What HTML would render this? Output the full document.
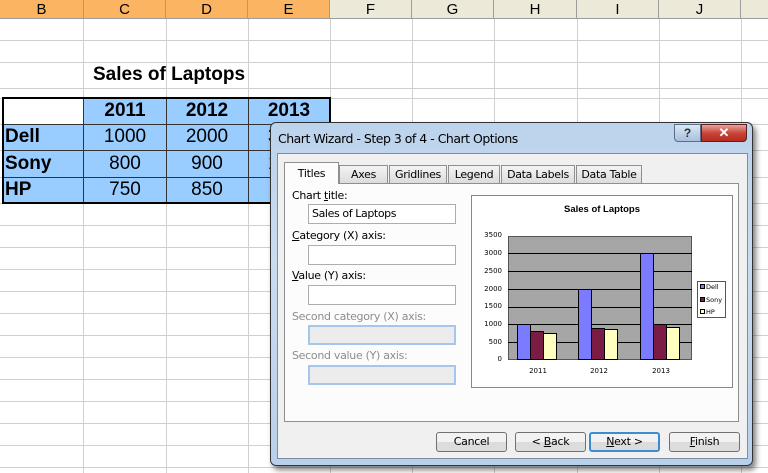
<!DOCTYPE html>
<html><head><meta charset="utf-8"><style>
*{margin:0;padding:0;box-sizing:border-box}
body{width:768px;height:473px;overflow:hidden;background:#fff;position:relative;font-family:"Liberation Sans",sans-serif}
.a{position:absolute}
.hd{position:absolute;top:0;height:19px;border-right:1px solid #9c9c9c;border-bottom:1px solid #9c9c9c;text-align:center;font-size:15px;line-height:19px;color:#000}
.vl{position:absolute;top:19px;bottom:0;width:1px;background:#d0d0d0}
.hl{position:absolute;left:0;right:0;height:1px;background:#d0d0d0}
.c{position:absolute;font-size:19px;text-align:center;line-height:26px}
.b{font-weight:bold}
.tab{position:absolute;top:165px;height:18px;border:1px solid #8e8f8f;border-bottom:none;background:linear-gradient(#f4f4f4,#dcdcdc);font-size:11px;text-align:center;line-height:17px;font-family:"DejaVu Sans",sans-serif;letter-spacing:-0.3px}
.lbl{position:absolute;font-size:11px;font-family:"DejaVu Sans",sans-serif;letter-spacing:-0.3px;color:#000}
.inp{position:absolute;left:308px;width:148px;height:20px;border:1px solid #abadb3;background:#fff}
.btn{position:absolute;top:432px;height:20px;border:1px solid #707070;border-radius:3px;background:linear-gradient(#f2f2f2 50%,#dcdcdc 50%);font-size:11px;font-family:"DejaVu Sans",sans-serif;text-align:center;line-height:18px;letter-spacing:-0.3px}
.yt{position:absolute;left:474px;width:28px;text-align:right;font-size:7px;font-family:"DejaVu Sans",sans-serif}
.gl{position:absolute;left:508px;width:184px;height:1px;background:#000}
</style></head><body>
<!-- headers -->
<div class="hd" style="left:0;width:84px;background:#fbb461">B</div>
<div class="hd" style="left:84px;width:82px;background:#fbb461">C</div>
<div class="hd" style="left:166px;width:82px;background:#fbb461">D</div>
<div class="hd" style="left:248px;width:82px;background:#fbb461">E</div>
<div class="hd" style="left:330px;width:82px;background:#ece9d8">F</div>
<div class="hd" style="left:412px;width:82px;background:#ece9d8">G</div>
<div class="hd" style="left:494px;width:83px;background:#ece9d8">H</div>
<div class="hd" style="left:577px;width:82px;background:#ece9d8">I</div>
<div class="hd" style="left:659px;width:82px;background:#ece9d8">J</div>
<div class="hd" style="left:741px;width:30px;background:#ece9d8"></div>
<!-- grid -->
<div class="vl" style="left:83px"></div><div class="vl" style="left:166px"></div><div class="vl" style="left:248px"></div><div class="vl" style="left:330px"></div><div class="vl" style="left:412px"></div><div class="vl" style="left:494px"></div><div class="vl" style="left:577px"></div><div class="vl" style="left:659px"></div><div class="vl" style="left:741px"></div>
<div class="hl" style="top:40px"></div><div class="hl" style="top:62px"></div><div class="hl" style="top:88px"></div><div class="hl" style="top:98px"></div><div class="hl" style="top:124px"></div><div class="hl" style="top:150px"></div><div class="hl" style="top:177px"></div><div class="hl" style="top:203px"></div><div class="hl" style="top:225px"></div><div class="hl" style="top:247px"></div><div class="hl" style="top:269px"></div><div class="hl" style="top:291px"></div><div class="hl" style="top:313px"></div><div class="hl" style="top:335px"></div><div class="hl" style="top:357px"></div><div class="hl" style="top:379px"></div><div class="hl" style="top:401px"></div><div class="hl" style="top:423px"></div><div class="hl" style="top:445px"></div><div class="hl" style="top:467px"></div>
<div class="a b" style="left:93px;top:64px;font-size:19px">Sales of Laptops</div>
<!-- table -->
<div class="a" style="left:2px;top:97px;width:329px;height:107px;border:2px solid #000;background:#fff"></div>
<div class="a" style="left:84px;top:99px;width:245px;height:25px;background:#99ccff"></div>
<div class="a" style="left:4px;top:125px;width:325px;height:77px;background:#99ccff"></div>
<div class="a" style="left:83px;top:99px;width:1px;height:103px;background:#333"></div>
<div class="a" style="left:166px;top:99px;width:1px;height:103px;background:#333"></div>
<div class="a" style="left:248px;top:99px;width:1px;height:103px;background:#333"></div>
<div class="a" style="left:4px;top:124px;width:325px;height:1px;background:#333"></div>
<div class="a" style="left:4px;top:150px;width:325px;height:1px;background:#333"></div>
<div class="a" style="left:4px;top:177px;width:325px;height:1px;background:#333"></div>
<div class="c b" style="left:84px;top:98px;width:82px">2011</div>
<div class="c b" style="left:166px;top:98px;width:82px">2012</div>
<div class="c b" style="left:248px;top:98px;width:82px">2013</div>
<div class="c b" style="left:5px;top:124px;text-align:left">Dell</div>
<div class="c b" style="left:5px;top:151px;text-align:left">Sony</div>
<div class="c b" style="left:5px;top:177px;text-align:left">HP</div>
<div class="c" style="left:84px;top:124px;width:82px">1000</div><div class="c" style="left:166px;top:124px;width:82px">2000</div><div class="c" style="left:248px;top:124px;width:82px">3000</div>
<div class="c" style="left:84px;top:151px;width:82px">800</div><div class="c" style="left:166px;top:151px;width:82px">900</div><div class="c" style="left:248px;top:151px;width:82px">1000</div>
<div class="c" style="left:84px;top:177px;width:82px">750</div><div class="c" style="left:166px;top:177px;width:82px">850</div><div class="c" style="left:248px;top:177px;width:82px">900</div>
<!-- dialog -->
<div class="a" style="left:270px;top:122px;width:483px;height:344px;border:1px solid #333;border-radius:6px;background:linear-gradient(#bcd3ec,#c9dcf0 40%,#b9d0ea);box-shadow:3px 4px 6px rgba(0,0,0,.5)"></div>
<div class="a" style="left:278px;top:131px;font-size:12.5px;font-family:'DejaVu Sans',sans-serif;letter-spacing:-0.5px">Chart Wizard - Step 3 of 4 - Chart Options</div>
<div class="a" style="left:674px;top:124px;width:27px;height:18px;border:1px solid #5a6f8c;border-radius:0 0 0 4px;background:linear-gradient(#dce7f4,#a9bfdb);font-size:12px;text-align:center;line-height:16px;font-weight:bold;color:#233">?</div>
<div class="a" style="left:701px;top:124px;width:46px;height:18px;border:1px solid #5a2020;border-radius:0 0 4px 0;background:linear-gradient(#e8a49a,#c9463a 50%,#b52a1e);font-size:13px;text-align:center;line-height:16px;font-weight:bold;color:#fff">✕</div>
<div class="a" style="left:277px;top:153px;width:471px;height:306px;border:1px solid #7c8ea3;background:#f0f0f0"></div>
<!-- tabs -->
<div class="a" style="left:284px;top:183px;width:455px;height:239px;border:1px solid #8e8f8f;background:#fcfcfc"></div>
<div class="tab" style="left:339px;width:49px">Axes</div>
<div class="tab" style="left:389px;width:58px">Gridlines</div>
<div class="tab" style="left:448px;width:52px">Legend</div>
<div class="tab" style="left:501px;width:74px">Data Labels</div>
<div class="tab" style="left:576px;width:66px">Data Table</div>
<div class="tab" style="left:284px;top:162px;height:22px;width:55px;background:#fcfcfc;line-height:22px">Titles</div>
<div class="lbl" style="left:292px;top:189px">Chart <u>t</u>itle:</div>
<div class="inp" style="top:204px;padding-left:3px;font-size:11px;font-family:'DejaVu Sans',sans-serif;letter-spacing:-0.4px;line-height:18px">Sales of Laptops</div>
<div class="lbl" style="left:292px;top:229px"><u>C</u>ategory (X) axis:</div>
<div class="inp" style="top:245px"></div>
<div class="lbl" style="left:292px;top:269px"><u>V</u>alue (Y) axis:</div>
<div class="inp" style="top:285px"></div>
<div class="lbl" style="left:292px;top:310px;color:#8d8d8d">Second category (X) axis:</div>
<div class="inp" style="top:325px;border:2px solid #a6c6ea;background:#ececec"></div>
<div class="lbl" style="left:292px;top:349px;color:#8d8d8d">Second value (Y) axis:</div>
<div class="inp" style="top:365px;border:2px solid #a6c6ea;background:#ececec"></div>
<!-- chart -->
<div class="a" style="left:471px;top:195px;width:262px;height:193px;border:1px solid #888;background:#fff"></div>
<div class="a b" style="left:471px;top:204px;width:262px;text-align:center;font-size:9.5px">Sales of Laptops</div>
<div class="a" style="left:508px;top:236px;width:184px;height:124px;background:#a6a6a6;border:1px solid #555"></div>
<div class="gl" style="top:253px"></div><div class="gl" style="top:271px"></div><div class="gl" style="top:289px"></div><div class="gl" style="top:307px"></div><div class="gl" style="top:324px"></div><div class="gl" style="top:342px"></div>
<div class="yt" style="top:231px">3500</div><div class="yt" style="top:249px">3000</div><div class="yt" style="top:267px">2500</div><div class="yt" style="top:285px">2000</div><div class="yt" style="top:302px">1500</div><div class="yt" style="top:320px">1000</div><div class="yt" style="top:338px">500</div><div class="yt" style="top:355px">0</div>
<svg class="a" style="left:0;top:0" width="768" height="473">
<g stroke="#000" stroke-width="1">
<rect x="517.5" y="324.5" width="13" height="35" fill="#7b7bff"/><rect x="530.5" y="331.5" width="13" height="28" fill="#7b1c44"/><rect x="543.5" y="333.5" width="13" height="26" fill="#ffffc0"/>
<rect x="578.5" y="289.5" width="13" height="70" fill="#7b7bff"/><rect x="591.5" y="328.5" width="13" height="31" fill="#7b1c44"/><rect x="604.5" y="329.5" width="13" height="30" fill="#ffffc0"/>
<rect x="640.5" y="253.5" width="13" height="106" fill="#7b7bff"/><rect x="653.5" y="324.5" width="13" height="35" fill="#7b1c44"/><rect x="666.5" y="327.5" width="13" height="32" fill="#ffffc0"/>
<rect x="697.5" y="281.5" width="28" height="36" fill="#fff" stroke="#555"/>
<rect x="700.5" y="284.5" width="4" height="4" fill="#7b7bff"/><rect x="700.5" y="297.5" width="4" height="4" fill="#7b1c44"/><rect x="700.5" y="309.5" width="4" height="4" fill="#ffffc0"/>
</g>
<g font-family="DejaVu Sans" font-size="6.5"><text x="706" y="289">Dell</text><text x="706" y="302">Sony</text><text x="706" y="314">HP</text></g>
<g font-family="DejaVu Sans" font-size="7" text-anchor="middle"><text x="538" y="373">2011</text><text x="599" y="373">2012</text><text x="661" y="373">2013</text></g>
</svg>
<!-- buttons -->
<div class="btn" style="left:436px;width:71px">Cancel</div>
<div class="btn" style="left:515px;width:71px">&lt; <u>B</u>ack</div>
<div class="btn" style="left:589px;width:71px;border:2px solid #3c8dd0;line-height:16px"><u>N</u>ext &gt;</div>
<div class="btn" style="left:669px;width:71px"><u>F</u>inish</div>
</body></html>
